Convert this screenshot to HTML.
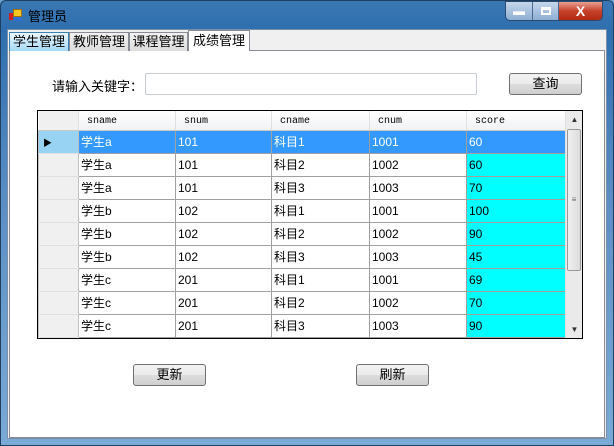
<!DOCTYPE html><html><head><meta charset="utf-8"><style>
*{margin:0;padding:0;box-sizing:border-box}
body{width:614px;height:446px;overflow:hidden;background:#6a9fd0;font-family:"Liberation Sans","Noto Sans CJK SC",sans-serif;font-size:12px;position:relative}
.abs{position:absolute}
.frame{left:0;top:0;width:614px;height:446px;background:linear-gradient(180deg,#3a78b4 0,#2f6eae 30px,#5b8fc4 200px,#7aaad6 446px);border:1px solid #1e3e62;border-radius:6px 6px 0 0}
.client{left:7px;top:29px;width:600px;height:410px;background:#f0f0f0;border:1px solid #7b8fa8}
.tab{top:32px;height:19px;border:1px solid #898c95;border-bottom:none;background:linear-gradient(#f2f2f2,#dcdcdc);font-size:13px;line-height:17px;text-align:center;color:#000}
.panel{left:9px;top:50px;width:596px;height:388px;background:#fff;border:1px solid #898c95}
.btn{height:22px;border:1px solid #707070;border-radius:3px;background:linear-gradient(#f2f2f2 0,#ebebeb 50%,#dddddd 51%,#cfcfcf);text-align:center;line-height:20px;font-size:13px}
.grid{left:37px;top:110px;width:546px;height:229px;border:1px solid #000;background:#fff;overflow:hidden}
table{border-collapse:collapse;position:absolute;left:0;top:0;table-layout:fixed}
td{border:1px solid #a0a0a0;height:23px;padding-left:2px;font-size:12px;white-space:nowrap;overflow:hidden}
th{height:19px;font-family:"Liberation Mono",monospace;font-weight:normal;font-size:10px;text-align:left;padding-left:8px;padding-top:3px;background:linear-gradient(#fff,#f1f2f4);border-right:1px solid #e0e0e0;border-bottom:1px solid #c8c8c8}
td.rh{background:#f0f0f0;border-color:#e0e0e0 #c0c0c0}
td.s{background:#00ffff}
tr.sel td{background:#3399ff;color:#fff}
tr.sel td.rh{background:#98d3f3}
</style></head><body>
<div class="abs frame"></div>
<div class="abs" style="left:9px;top:9px;width:14px;height:13px">
<div class="abs" style="left:4px;top:0;width:9px;height:8px;background:#f8c820;border:1px solid #a07010"></div>
<div class="abs" style="left:0;top:4px;width:4px;height:7px;background:#d02020"></div>
<div class="abs" style="left:5px;top:8px;width:8px;height:4px;background:#3070d0"></div></div>
<div class="abs" style="left:28px;top:6px;font-size:13px;color:#000">管理员</div>
<div class="abs" style="left:505px;top:1px;width:98px;height:20px;border:1px solid #2a4a70;border-radius:0 0 5px 5px;overflow:hidden;display:flex">
<div style="width:27px;background:linear-gradient(#c6d7ea,#8daed4);border-right:1px solid #4a6a90;text-align:center;color:#fff;font-weight:bold;line-height:18px">▬</div>
<div style="width:26px;background:linear-gradient(#c6d7ea,#8daed4);border-right:1px solid #4a6a90;position:relative"><div class="abs" style="left:8px;top:5px;width:10px;height:8px;border:2px solid #fff;border-top-width:3px"></div></div>
<div style="flex:1;background:linear-gradient(#e8a093,#c6402a 50%,#b32a14);color:#fff;font-weight:bold;text-align:center;line-height:18px;font-size:14px">X</div></div>
<div class="abs client"></div>
<div class="abs panel"></div>
<div class="abs tab" style="left:9px;width:60px;background:linear-gradient(#eaf6fd,#a7d9f5);border-color:#3c7fb1">学生管理</div>
<div class="abs tab" style="left:69px;width:60px">教师管理</div>
<div class="abs tab" style="left:129px;width:59px">课程管理</div>
<div class="abs tab" style="left:188px;width:62px;top:30px;height:21px;background:#fff;line-height:20px">成绩管理</div>
<div class="abs" style="left:52px;top:76px;font-size:13px">请输入关键字：</div>
<div class="abs" style="left:145px;top:73px;width:332px;height:22px;border:1px solid #c8cdd6;border-radius:2px;background:#fff"></div>
<div class="abs btn" style="left:509px;top:73px;width:73px">查询</div>
<div class="abs grid">
<table>
<colgroup><col style="width:40px"><col style="width:97px"><col style="width:96px"><col style="width:98px"><col style="width:97px"><col style="width:99px"></colgroup>
<tr><th style="background:#f0f0f0"></th><th>sname</th><th>snum</th><th>cname</th><th>cnum</th><th>score</th></tr>
<tr class="sel"><td class="rh"><span style="color:#000;font-size:9px;padding-left:2px">▶</span></td><td>学生a</td><td>101</td><td>科目1</td><td>1001</td><td>60</td></tr>
<tr><td class="rh"></td><td>学生a</td><td>101</td><td>科目2</td><td>1002</td><td class="s">60</td></tr>
<tr><td class="rh"></td><td>学生a</td><td>101</td><td>科目3</td><td>1003</td><td class="s">70</td></tr>
<tr><td class="rh"></td><td>学生b</td><td>102</td><td>科目1</td><td>1001</td><td class="s">100</td></tr>
<tr><td class="rh"></td><td>学生b</td><td>102</td><td>科目2</td><td>1002</td><td class="s">90</td></tr>
<tr><td class="rh"></td><td>学生b</td><td>102</td><td>科目3</td><td>1003</td><td class="s">45</td></tr>
<tr><td class="rh"></td><td>学生c</td><td>201</td><td>科目1</td><td>1001</td><td class="s">69</td></tr>
<tr><td class="rh"></td><td>学生c</td><td>201</td><td>科目2</td><td>1002</td><td class="s">70</td></tr>
<tr><td class="rh"></td><td>学生c</td><td>201</td><td>科目3</td><td>1003</td><td class="s">90</td></tr>
</table>
<div class="abs" style="left:527px;top:0;width:17px;height:227px;background:#eaeaea;border-left:1px solid #e0e0e0">
<div class="abs" style="left:0;top:0;width:17px;height:17px;text-align:center;font-size:8px;line-height:17px;color:#333">▲</div>
<div class="abs" style="left:1px;top:18px;width:14px;height:142px;border:1px solid #999;border-radius:2px;background:linear-gradient(90deg,#f0f0f0,#dcdcdc);text-align:center;line-height:140px;font-size:8px;color:#666">≡</div>
<div class="abs" style="left:0;top:210px;width:17px;height:17px;text-align:center;font-size:8px;line-height:17px;color:#333">▼</div>
</div></div>
<div class="abs btn" style="left:133px;top:364px;width:73px">更新</div>
<div class="abs btn" style="left:356px;top:364px;width:73px">刷新</div>
</body></html>
